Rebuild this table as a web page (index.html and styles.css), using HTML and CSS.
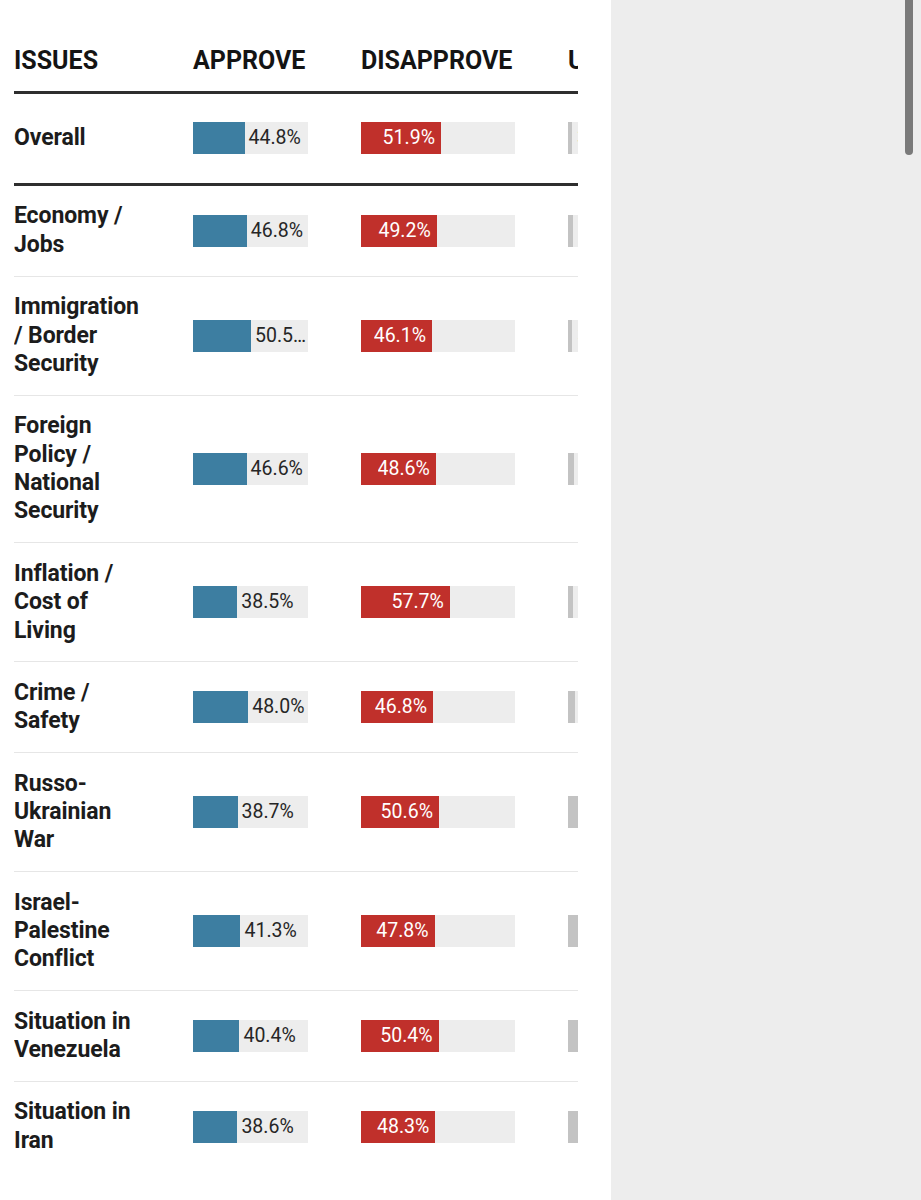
FILE: index.html
```html
<!DOCTYPE html>
<html>
<head>
<meta charset="utf-8">
<link rel="stylesheet" href="styles.css">
</head>
<body>
<div class="page">
  <main class="panel">
    <div class="table">
      <div class="row head">
        <div class="cell label">ISSUES</div>
        <div class="cell col-a">APPROVE</div>
        <div class="cell col-d">DISAPPROVE</div>
        <div class="cell col-u">UNSURE</div>
      </div>

      <div class="row overall">
        <div class="cell label">Overall</div>
        <div class="cell col-a"><div class="bar bar-a"><span class="fill" style="width:44.8%"></span><span class="val">44.8%</span></div></div>
        <div class="cell col-d"><div class="bar bar-d"><span class="fill" style="width:51.9%"><span class="val">51.9%</span></span></div></div>
        <div class="cell col-u"><div class="bar bar-u"><span class="fill" style="width:3.3%"></span><span class="val">3.3%</span></div></div>
      </div>

      <div class="row">
        <div class="cell label">Economy /<br>Jobs</div>
        <div class="cell col-a"><div class="bar bar-a"><span class="fill" style="width:46.8%"></span><span class="val">46.8%</span></div></div>
        <div class="cell col-d"><div class="bar bar-d"><span class="fill" style="width:49.2%"><span class="val">49.2%</span></span></div></div>
        <div class="cell col-u"><div class="bar bar-u"><span class="fill" style="width:4.0%"></span><span class="val">4.0%</span></div></div>
      </div>

      <div class="row">
        <div class="cell label">Immigration<br>/ Border<br>Security</div>
        <div class="cell col-a"><div class="bar bar-a"><span class="fill" style="width:50.5%"></span><span class="val">50.5%</span></div></div>
        <div class="cell col-d"><div class="bar bar-d"><span class="fill" style="width:46.1%"><span class="val">46.1%</span></span></div></div>
        <div class="cell col-u"><div class="bar bar-u"><span class="fill" style="width:3.4%"></span><span class="val">3.4%</span></div></div>
      </div>

      <div class="row">
        <div class="cell label">Foreign<br>Policy /<br>National<br>Security</div>
        <div class="cell col-a"><div class="bar bar-a"><span class="fill" style="width:46.6%"></span><span class="val">46.6%</span></div></div>
        <div class="cell col-d"><div class="bar bar-d"><span class="fill" style="width:48.6%"><span class="val">48.6%</span></span></div></div>
        <div class="cell col-u"><div class="bar bar-u"><span class="fill" style="width:4.8%"></span><span class="val">4.8%</span></div></div>
      </div>

      <div class="row">
        <div class="cell label">Inflation /<br>Cost of<br>Living</div>
        <div class="cell col-a"><div class="bar bar-a"><span class="fill" style="width:38.5%"></span><span class="val">38.5%</span></div></div>
        <div class="cell col-d"><div class="bar bar-d"><span class="fill" style="width:57.7%"><span class="val">57.7%</span></span></div></div>
        <div class="cell col-u"><div class="bar bar-u"><span class="fill" style="width:3.8%"></span><span class="val">3.8%</span></div></div>
      </div>

      <div class="row">
        <div class="cell label">Crime /<br>Safety</div>
        <div class="cell col-a"><div class="bar bar-a"><span class="fill" style="width:48.0%"></span><span class="val">48.0%</span></div></div>
        <div class="cell col-d"><div class="bar bar-d"><span class="fill" style="width:46.8%"><span class="val">46.8%</span></span></div></div>
        <div class="cell col-u"><div class="bar bar-u"><span class="fill" style="width:5.2%"></span><span class="val">5.2%</span></div></div>
      </div>

      <div class="row">
        <div class="cell label">Russo-<br>Ukrainian<br>War</div>
        <div class="cell col-a"><div class="bar bar-a"><span class="fill" style="width:38.7%"></span><span class="val">38.7%</span></div></div>
        <div class="cell col-d"><div class="bar bar-d"><span class="fill" style="width:50.6%"><span class="val">50.6%</span></span></div></div>
        <div class="cell col-u"><div class="bar bar-u"><span class="fill" style="width:10.7%"></span><span class="val">10.7%</span></div></div>
      </div>

      <div class="row">
        <div class="cell label">Israel-<br>Palestine<br>Conflict</div>
        <div class="cell col-a"><div class="bar bar-a"><span class="fill" style="width:41.3%"></span><span class="val">41.3%</span></div></div>
        <div class="cell col-d"><div class="bar bar-d"><span class="fill" style="width:47.8%"><span class="val">47.8%</span></span></div></div>
        <div class="cell col-u"><div class="bar bar-u"><span class="fill" style="width:10.9%"></span><span class="val">10.9%</span></div></div>
      </div>

      <div class="row">
        <div class="cell label">Situation in<br>Venezuela</div>
        <div class="cell col-a"><div class="bar bar-a"><span class="fill" style="width:40.4%"></span><span class="val">40.4%</span></div></div>
        <div class="cell col-d"><div class="bar bar-d"><span class="fill" style="width:50.4%"><span class="val">50.4%</span></span></div></div>
        <div class="cell col-u"><div class="bar bar-u"><span class="fill" style="width:9.2%"></span><span class="val">9.2%</span></div></div>
      </div>

      <div class="row last">
        <div class="cell label">Situation in<br>Iran</div>
        <div class="cell col-a"><div class="bar bar-a"><span class="fill" style="width:38.6%"></span><span class="val">38.6%</span></div></div>
        <div class="cell col-d"><div class="bar bar-d"><span class="fill" style="width:48.3%"><span class="val">48.3%</span></span></div></div>
        <div class="cell col-u"><div class="bar bar-u"><span class="fill" style="width:13.1%"></span><span class="val">13.1%</span></div></div>
      </div>
    </div>
  </main>
  <aside class="side">
    <div class="scrollbar"></div>
  </aside>
</div>
</body>
</html>
```

FILE: styles.css
```css
* { box-sizing: border-box; }
html, body {
  margin: 0;
  padding: 0;
  height: 1200px;
  overflow: hidden;
  background: #ffffff;
}
body {
  font-family: Roboto, "Liberation Sans", Arial, sans-serif;
  color: #1c1c1c;
}
.page {
  display: flex;
  height: 1200px;
}
.panel {
  width: 611px;
  flex: none;
  background: #ffffff;
  padding-left: 14px;
}
.side {
  flex: 1;
  background: #ededed;
  position: relative;
}
.scrollbar {
  position: absolute;
  top: -6px;
  left: 294px;
  width: 8px;
  height: 161px;
  border-radius: 4px;
  background: #7a7a7a;
}
.table {
  width: 564px;
  overflow: hidden;
}
.row {
  display: grid;
  grid-template-columns: 126px 115px 154px 130px;
  column-gap: 53px;
  align-items: center;
  padding: 16.45px 0;
  border-bottom: 1px solid #e6e6e6;
  width: 700px;
}
.row.last { border-bottom: none; }
.row.head {
  padding: 47px 0 16px;
  border-bottom: 3px solid #2e2e2e;
}
.row.overall {
  padding: 28px 0 29px;
  border-bottom: 3px solid #2e2e2e;
}
.cell { min-width: 0; }
.label {
  font-size: 23px;
  font-weight: 700;
  line-height: 28.4px;
  color: #1c1c1c;
  letter-spacing: -0.1px;
}
.head .cell {
  font-size: 25px;
  font-weight: 700;
  line-height: 28px;
  color: #141414;
  white-space: nowrap;
  letter-spacing: 0;
}
.bar {
  display: flex;
  height: 32px;
  background: #ededed;
  font-size: 19.5px;
  line-height: 32px;
  white-space: nowrap;
}
.bar .fill {
  flex: none;
  height: 32px;
}
.bar .val {
  min-width: 0;
  overflow: hidden;
  text-overflow: ellipsis;
}
.bar-a .fill { background: #3d7ea1; }
.bar-a .val {
  flex: 1;
  padding-left: 4px;
  padding-right: 1px;
  color: #262626;
}
.bar-d .fill {
  background: #c0302b;
  display: flex;
  justify-content: flex-end;
}
.bar-d .val {
  color: #ffffff;
  padding-right: 6px;
}
.bar-u .fill { background: #c3c3c3; }
.bar-u .val {
  flex: 1;
  padding-left: 5px;
  color: #262626;
}
```
